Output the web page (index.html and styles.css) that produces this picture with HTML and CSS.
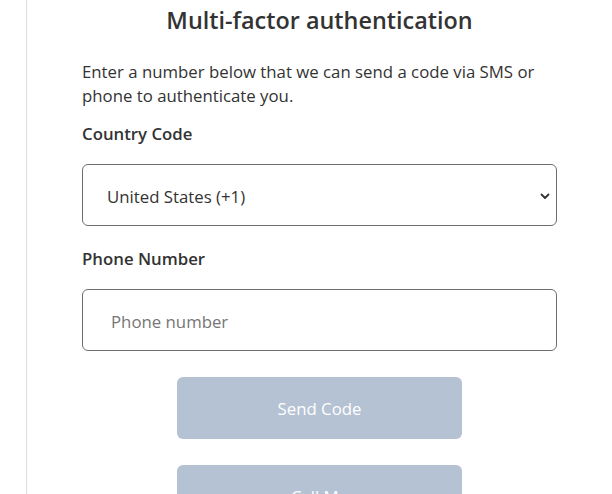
FILE: index.html
```html
<!DOCTYPE html>
<html lang="en">
<head>
  <meta charset="UTF-8" />
  <meta name="viewport" content="width=device-width, initial-scale=1.0"/>
  <title>Multi-factor authentication</title>
  <link rel="stylesheet" href="styles.css">
</head>
<body>
  <div class="mfa-page">
    <div class="mfa-container">
      <h2>Multi-factor authentication</h2>
      <p class="intro">Enter a number below that we can send a code via SMS or phone to authenticate you.</p>
      <form id="mfaForm">
        <label for="country">Country Code</label>
        <div class="select-wrap">
          <select id="country">
            <option>United States (+1)</option>
          </select>
          <svg class="chevron" width="10" height="7" viewBox="0 0 10 7">
            <path d="M1.5 1.5 L5 5 L8.5 1.5" fill="none" stroke="#333" stroke-width="1.8" stroke-linecap="round" stroke-linejoin="round"/>
          </svg>
        </div>
        <label for="phone">Phone Number</label>
        <input id="phone" type="tel" placeholder="Phone number" />
        <div class="actions">
          <button type="submit" disabled>Send Code</button>
          <button type="button" disabled>Call Me</button>
        </div>
      </form>
    </div>
  </div>
</body>
</html>
```

FILE: styles.css
```css
body {
  margin: 0;
  padding: 0;
  font-family: "Open Sans", "Noto Sans", sans-serif;
  color: #333;
  background: white;
  overflow: hidden;
}

.mfa-page {
  margin-left: 26px;
  border-left: 1px solid #dedede;
  min-height: 100vh;
}

.mfa-container {
  width: 475px;
  margin: 0 auto;
  padding-top: 5px;
}

.mfa-container h2 {
  text-align: center;
  font-size: 23.4px;
  font-weight: 600;
  line-height: 30px;
  margin: 0 0 25px;
  color: #333;
}

.intro {
  font-size: 16.8px;
  line-height: 24px;
  margin: 0 0 14px;
}

form {
  display: flex;
  flex-direction: column;
}

label {
  font-size: 16.8px;
  font-weight: 600;
  line-height: 24px;
}

.select-wrap {
  position: relative;
  margin: 18px 0 21px;
}

select,
input {
  width: 100%;
  height: 62px;
  box-sizing: border-box;
  border: 1px solid #6e6e6e;
  border-radius: 6px;
  font-family: inherit;
  font-size: 16.8px;
  color: #333;
  background: white;
}

select {
  appearance: none;
  padding: 3px 24px 0;
}

.chevron {
  position: absolute;
  right: 7px;
  top: 29px;
}

input {
  margin: 18px 0 26px;
  padding: 2px 28px 0;
}

input::placeholder {
  color: #767676;
}

.actions {
  display: flex;
  flex-direction: column;
  align-items: center;
  gap: 26px;
}

.actions button {
  width: 285px;
  height: 62px;
  border: none;
  border-radius: 6px;
  background-color: #b5c2d3;
  color: white;
  font-family: inherit;
  font-size: 16.8px;
  padding: 0;
}
```
